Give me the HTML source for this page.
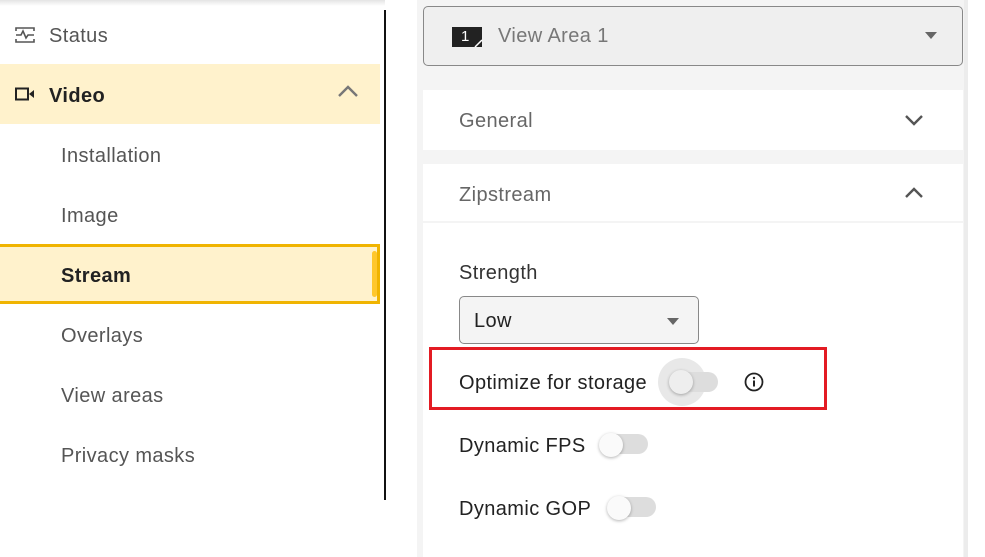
<!DOCTYPE html>
<html><head><style>
*{margin:0;padding:0;box-sizing:border-box}
body{width:985px;height:557px;overflow:hidden;background:#fff;font-family:"Liberation Sans",sans-serif;position:relative;color:#333}
.a{position:absolute}
.t{position:absolute;font-size:20px;letter-spacing:0.4px;line-height:24px;white-space:nowrap}
.nav{color:#555}
.tog{position:absolute;height:20px;border-radius:10px;background:#ddd}
.knob{position:absolute;width:24px;height:24px;border-radius:50%;background:#fafafa;box-shadow:0 1px 3px rgba(0,0,0,.3)}
</style></head><body>
<div class="a" style="left:0;top:0;width:385px;height:6px;background:linear-gradient(#e4e4e4,#fff)"></div>
<div class="a" style="left:384px;top:10px;width:2px;height:490px;background:#111"></div>
<svg class="a" style="left:15px;top:27px" width="20" height="16" viewBox="0 0 20 16"><path d="M1 4V1h18v3M1 12v3h18v-3M1 8h5l2-4 3 7 2-3h6" fill="none" stroke="#555" stroke-width="1.6"/></svg>
<div class="t nav" style="left:49px;top:24px">Status</div>
<div class="a" style="left:0;top:64px;width:380px;height:60px;background:#fff2cc"></div>
<svg class="a" style="left:15px;top:87px" width="20" height="14" viewBox="0 0 20 14"><rect x="1" y="1.5" width="12" height="11" fill="none" stroke="#222" stroke-width="2"/><path d="M14 7l5-4v8z" fill="#222"/></svg>
<div class="t" style="left:49px;top:84px;font-weight:bold;color:#222">Video</div>
<svg class="a" style="left:337px;top:84px" width="22" height="14" viewBox="0 0 22 14"><path d="M2 12l9-9 9 9" fill="none" stroke="#777" stroke-width="2.4"/></svg>
<div class="t nav" style="left:61px;top:144px">Installation</div>
<div class="t nav" style="left:61px;top:204px">Image</div>
<div class="a" style="left:0;top:244px;width:380px;height:60px;background:#fff2cc;border:3px solid #f0b400;border-left:none"></div>
<div class="a" style="left:372px;top:251px;width:5px;height:46px;background:#ffc72c;border-radius:3px"></div>
<div class="t" style="left:61px;top:264px;font-weight:bold;color:#222">Stream</div>
<div class="t nav" style="left:61px;top:324px">Overlays</div>
<div class="t nav" style="left:61px;top:384px">View areas</div>
<div class="t nav" style="left:61px;top:444px">Privacy masks</div>

<div class="a" style="left:417px;top:0;width:551px;height:557px;background:#f4f4f4"></div>
<div class="a" style="left:964px;top:0;width:4px;height:557px;background:#ececec"></div>
<div class="a" style="left:423px;top:6px;width:540px;height:60px;background:#efefef;border:1px solid #888;border-radius:5px"></div>
<div class="a" style="left:452px;top:27px;width:30px;height:20px;background:#222;color:#fff;font-size:15px;line-height:20px;padding-left:9px">1</div>
<svg class="a" style="left:474px;top:38px" width="10" height="10"><path d="M1 9l7-7" stroke="#fff" stroke-width="1.5"/></svg>
<div class="t" style="left:498px;top:24px;color:#777">View Area 1</div>
<svg class="a" style="left:925px;top:32px" width="12" height="7"><path d="M0 0h12L6 7z" fill="#666"/></svg>
<div class="a" style="left:423px;top:90px;width:540px;height:60px;background:#fff"></div>
<div class="t" style="left:459px;top:109px;color:#666">General</div>
<svg class="a" style="left:904px;top:114px" width="20" height="12"><path d="M2 2l8 8 8-8" fill="none" stroke="#555" stroke-width="2.4"/></svg>
<div class="a" style="left:423px;top:164px;width:540px;height:393px;background:#fff"></div>
<div class="a" style="left:423px;top:221px;width:540px;height:2px;background:#f4f4f4"></div>
<div class="t" style="left:459px;top:183px;color:#666">Zipstream</div>
<svg class="a" style="left:904px;top:187px" width="20" height="12"><path d="M2 10l8-8 8 8" fill="none" stroke="#555" stroke-width="2.4"/></svg>
<div class="t" style="left:459px;top:261px">Strength</div>
<div class="a" style="left:459px;top:296px;width:240px;height:48px;background:#f4f4f4;border:1px solid #888;border-radius:5px"></div>
<div class="t" style="left:474px;top:309px;color:#222">Low</div>
<svg class="a" style="left:667px;top:318px" width="12" height="7"><path d="M0 0h12L6 7z" fill="#666"/></svg>
<div class="a" style="left:429px;top:347px;width:398px;height:63px;border:3px solid #e31b23"></div>
<div class="t" style="left:459px;top:371px;color:#222">Optimize for storage</div>
<div class="a" style="left:658px;top:358px;width:48px;height:48px;border-radius:50%;background:#e8e8e8"></div>
<div class="tog" style="left:670px;top:372px;width:48px"></div>
<div class="knob" style="left:669px;top:370px;background:#eee"></div>
<svg class="a" style="left:744px;top:372px" width="20" height="20"><circle cx="10" cy="10" r="8.5" fill="none" stroke="#222" stroke-width="1.8"/><rect x="9" y="8.5" width="2" height="6" fill="#222"/><circle cx="10" cy="6" r="1.2" fill="#222"/></svg>
<div class="t" style="left:459px;top:434px;color:#222">Dynamic FPS</div>
<div class="tog" style="left:600px;top:434px;width:48px"></div>
<div class="knob" style="left:599px;top:433px"></div>
<div class="t" style="left:459px;top:497px;color:#222">Dynamic GOP</div>
<div class="tog" style="left:608px;top:497px;width:48px"></div>
<div class="knob" style="left:607px;top:496px"></div>
</body></html>
